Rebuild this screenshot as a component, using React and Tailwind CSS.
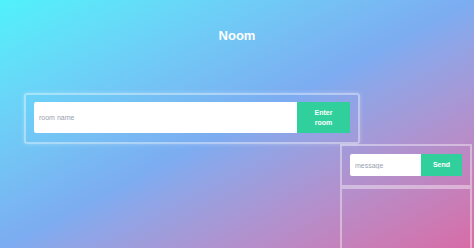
import React from 'react';

export default function App() {
  return (
    <div
      className="w-[474px] h-[248px] overflow-hidden flex flex-col bg-linear-to-br from-[#4ff2fb] via-[#7cacf1] to-[#d86ba6]"
      style={{ fontFamily: '"Liberation Sans", Arial, sans-serif' }}
    >
      {/* Header */}
      <header className="pt-[28px] text-center">
        <h1 className="text-white font-bold text-[13px] leading-[16px]">Noom</h1>
      </header>

      {/* Room form */}
      <form className="mt-[49px] ml-[24px] w-[336px] h-[51px] border-2 border-white/40 rounded-[3px] px-[8px] pt-[7px] flex shadow-[0_0_4px_rgba(255,255,255,0.3)]">
        <input
          placeholder="room name"
          className="flex-1 h-[31px] bg-white rounded-l-[2px] px-[5px] text-[7px] text-gray-600 placeholder:text-gray-400 outline-none"
        />
        <button
          type="button"
          className="w-[53px] h-[31px] bg-[#30cf9c] text-white font-bold text-[7px] leading-[10px] px-[10px]"
        >
          Enter room
        </button>
      </form>

      {/* Chat */}
      <section className="self-end mr-[2px] w-[132px] flex-1 flex flex-col">
        <form className="h-[43px] border-2 border-white/40 px-[8px] pt-[8px] flex">
          <input
            placeholder="message"
            className="w-[71px] h-[22px] bg-white rounded-l-[2px] px-[5px] text-[7px] text-gray-600 placeholder:text-gray-400 outline-none"
          />
          <button
            type="button"
            className="w-[41px] h-[22px] bg-[#30cf9c] text-white font-bold text-[7px]"
          >
            Send
          </button>
        </form>
        <ul className="flex-1 border-2 border-b-0 border-white/40"></ul>
      </section>
    </div>
  );
}
